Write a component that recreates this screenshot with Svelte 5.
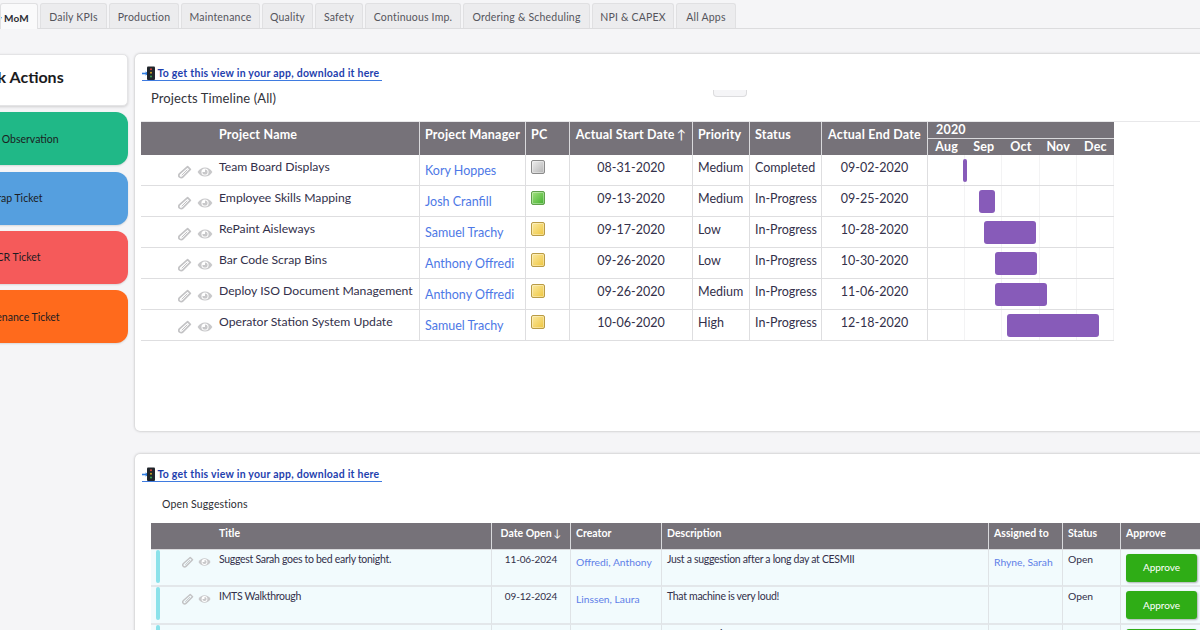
<script>
  const tabs = [
    { label: "Daily MoM", width: 38, active: true },
    { label: "Daily KPIs", width: 67 },
    { label: "Production", width: 70 },
    { label: "Maintenance", width: 79 },
    { label: "Quality", width: 51 },
    { label: "Safety", width: 48 },
    { label: "Continuous Imp.", width: 96 },
    { label: "Ordering & Scheduling", width: 127 },
    { label: "NPI & CAPEX", width: 82 },
    { label: "All Apps", width: 60 },
  ];

  const actions = [
    { label: "Safety Observation", color: "#20b887" },
    { label: "Scrap Ticket", color: "#559fdf" },
    { label: "NCR Ticket", color: "#f55a5a" },
    { label: "Maintenance Ticket", color: "#ff6a1c" },
  ];

  // bar offsets are measured from the left edge of the gantt column
  const projects = [
    { name: "Team Board Displays", pm: "Kory Hoppes", pc: "grey", start: "08-31-2020", priority: "Medium", status: "Completed", end: "09-02-2020", left: 35, width: 4 },
    { name: "Employee Skills Mapping", pm: "Josh Cranfill", pc: "green", start: "09-13-2020", priority: "Medium", status: "In-Progress", end: "09-25-2020", left: 51, width: 16 },
    { name: "RePaint Aisleways", pm: "Samuel Trachy", pc: "yellow", start: "09-17-2020", priority: "Low", status: "In-Progress", end: "10-28-2020", left: 56, width: 52 },
    { name: "Bar Code Scrap Bins", pm: "Anthony Offredi", pc: "yellow", start: "09-26-2020", priority: "Low", status: "In-Progress", end: "10-30-2020", left: 67, width: 42 },
    { name: "Deploy ISO Document Management", pm: "Anthony Offredi", pc: "yellow", start: "09-26-2020", priority: "Medium", status: "In-Progress", end: "11-06-2020", left: 67, width: 52 },
    { name: "Operator Station System Update", pm: "Samuel Trachy", pc: "yellow", start: "10-06-2020", priority: "High", status: "In-Progress", end: "12-18-2020", left: 79, width: 92 },
  ];

  const months = ["Aug", "Sep", "Oct", "Nov", "Dec"];

  const suggestions = [
    { title: "Suggest Sarah goes to bed early tonight.", date: "11-06-2024", creator: "Offredi, Anthony", description: "Just a suggestion after a long day at CESMII", assigned: "Rhyne, Sarah", status: "Open" },
    { title: "IMTS Walkthrough", date: "09-12-2024", creator: "Linssen, Laura", description: "That machine is very loud!", assigned: "", status: "Open" },
    { title: "Test MOM", date: "09-09-2024", creator: "Offredi, Anthony", description: "Test suggestion", assigned: "", status: "Open" },
  ];
</script>

{#snippet rowIcons()}
  <svg class="pencil" viewBox="0 0 14 14" width="14" height="14">
    <path d="M9.6 1.7l2.7 2.7-7.4 7.4c-.9.9-2.6 1-3.4.2s-.7-2.4.2-3.3z" fill="none" stroke="#c3c3c5" stroke-width="1.7" stroke-linejoin="round" />
    <path d="M3.7 10.3l5.6-5.6" stroke="#c3c3c5" stroke-width="1" />
  </svg>
  <svg class="eye" viewBox="0 0 16 12" width="16" height="12">
    <path d="M.6 6C2.4 2.9 5 1.4 8 1.4s5.6 1.5 7.4 4.6c-1.8 3.1-4.4 4.6-7.4 4.6S2.4 9.1.6 6z" fill="#c8c8ca" />
    <circle cx="8" cy="6" r="3.6" fill="#fff" />
    <path d="M8 3.4A2.6 2.6 0 1 1 5.4 6H8z" fill="#c8c8ca" />
  </svg>
{/snippet}

{#snippet downloadLink()}
  <a class="download" href="#top">
    <svg viewBox="0 0 13 14" width="13" height="14">
      <path d="M0 7.5h5" stroke="#2f7de1" stroke-width="1.6" />
      <path d="M3.6 5.3l2.6 2.2-2.6 2.2z" fill="#2f7de1" />
      <rect x="5" y="0.5" width="8" height="13.5" rx="1" fill="#20252b" />
      <circle cx="9" cy="3.2" r="1" fill="#d8453c" />
      <circle cx="9" cy="6.8" r="1" fill="#c9a227" />
      <circle cx="9" cy="10.4" r="1" fill="#3aa655" />
    </svg>
    To get this view in your app, download it here&nbsp;
  </a>
{/snippet}

<div class="page">
  <nav class="tabs">
    {#each tabs as tab}
      <div class="tab" class:active={tab.active} style="width: {tab.width}px">{tab.label}</div>
    {/each}
  </nav>

  <div class="content">
    <aside class="actions">
      <div class="actions-title">Quick Actions</div>
      {#each actions as action}
        <div class="action" style="background: {action.color}">{action.label}</div>
      {/each}
    </aside>

    <main class="cards">
      <section class="card timeline">
        {@render downloadLink()}
        <div class="sliver"></div>
        <h2 class="timeline-title">Projects Timeline (All)</h2>
        <div class="rule"></div>

        <div class="projects">
          <div class="phead name">Project Name</div>
          <div class="phead">Project Manager</div>
          <div class="phead">PC</div>
          <div class="phead center">Actual Start Date<span class="arrow">↑</span></div>
          <div class="phead">Priority</div>
          <div class="phead">Status</div>
          <div class="phead center">Actual End Date</div>
          <div class="phead gantt-head">
            <div class="year">2020</div>
            <div class="months">
              {#each months as month}
                <span>{month}</span>
              {/each}
            </div>
          </div>

          {#each projects as p}
            <div class="cell name-cell">
              <span class="icons">{@render rowIcons()}</span>
              <span>{p.name}</span>
            </div>
            <div class="cell"><span class="person">{p.pm}</span></div>
            <div class="cell"><span class="pc {p.pc}"></span></div>
            <div class="cell center">{p.start}</div>
            <div class="cell">{p.priority}</div>
            <div class="cell">{p.status}</div>
            <div class="cell center">{p.end}</div>
            <div class="cell gantt">
              {#each months as month}
                <i></i>
              {/each}
              <b style="left: {p.left}px; width: {p.width}px"></b>
            </div>
          {/each}
        </div>
      </section>

      <section class="card open">
        {@render downloadLink()}
        <h2 class="open-title">Open Suggestions</h2>

        <div class="suggestions">
          <div class="shead title-head">Title</div>
          <div class="shead center">Date Open<span class="arrow">↓</span></div>
          <div class="shead">Creator</div>
          <div class="shead">Description</div>
          <div class="shead">Assigned to</div>
          <div class="shead">Status</div>
          <div class="shead">Approve</div>

          {#each suggestions as s}
            <div class="scell title-cell">
              <span class="marker"></span>
              <span class="icons small">{@render rowIcons()}</span>
              <span>{s.title}</span>
            </div>
            <div class="scell center date">{s.date}</div>
            <div class="scell"><span class="person low">{s.creator}</span></div>
            <div class="scell">{s.description}</div>
            <div class="scell"><span class="person low">{s.assigned}</span></div>
            <div class="scell state">{s.status}</div>
            <div class="scell approve-cell"><div class="approve">Approve</div></div>
          {/each}
        </div>
      </section>
    </main>
  </div>
</div>

<style>
  :global(body) {
    margin: 0;
    overflow: hidden;
    background: #f5f5f7;
  }

  .page {
    width: 1200px;
    height: 630px;
    overflow: hidden;
    font-family: Lato, "Open Sans", sans-serif;
    color: #33304a;
  }

  .tabs {
    display: flex;
    gap: 2px;
    height: 29px;
    box-sizing: border-box;
    padding-top: 3px;
    border-bottom: 1px solid #dcdcde;
  }

  .tab {
    box-sizing: border-box;
    height: 25px;
    padding-top: 2px;
    display: flex;
    align-items: center;
    justify-content: center;
    flex-shrink: 0;
    border: 1px solid #e0e0e2;
    border-bottom: 0;
    border-radius: 3px 3px 0 0;
    background: #ececee;
    color: #55555c;
    font-size: 10.5px;
    letter-spacing: 0.2px;
    white-space: nowrap;
  }

  .tab.active {
    height: 26px;
    background: #fafafb;
    color: #2c2c33;
    font-weight: 700;
    font-size: 10px;
    direction: rtl;
    overflow: hidden;
    justify-content: flex-start;
    padding-right: 8px;
  }

  .content {
    display: flex;
    gap: 7px;
    padding-top: 25px;
    margin-left: -72px;
  }

  .actions {
    width: 200px;
    flex-shrink: 0;
    display: flex;
    flex-direction: column;
    gap: 6.3px;
  }

  .actions-title {
    box-sizing: border-box;
    height: 52px;
    padding: 0 0 8px 35px;
    display: flex;
    align-items: center;
    background: #fff;
    border: 1px solid #e4e4e6;
    border-radius: 5px;
    box-shadow: 0 1px 3px rgba(0, 0, 0, 0.16);
    color: #1a1a1d;
    font-size: 16px;
    font-weight: 700;
  }

  .action {
    box-sizing: border-box;
    height: 53px;
    padding: 0 27px 0 0;
    display: flex;
    align-items: center;
    justify-content: center;
    border-radius: 12px;
    color: #1c1c22;
    font-size: 10.5px;
    box-shadow: 0 1px 2px rgba(0, 0, 0, 0.12);
    white-space: nowrap;
  }

  .cards {
    display: flex;
    flex-direction: column;
    gap: 23px;
    width: 1137px;
    flex-shrink: 0;
  }

  .card {
    position: relative;
    box-sizing: border-box;
    background: #fff;
    border-radius: 5px;
    box-shadow: 0 0 3px rgba(0, 0, 0, 0.28);
    padding: 11px 0 0 7px;
  }

  .timeline {
    height: 377px;
  }

  .open {
    height: 300px;
    padding-top: 12px;
  }

  .download {
    display: flex;
    align-items: flex-end;
    width: fit-content;
    height: 15px;
    color: #1f3fae;
    font-size: 10.5px;
    font-weight: 700;
    letter-spacing: 0.25px;
    line-height: 13px;
    text-decoration: none;
    border-bottom: 1px solid #3f7be0;
    white-space: pre;
  }

  .sliver {
    position: absolute;
    left: 578px;
    top: 36px;
    width: 32px;
    height: 6px;
    border: 1px solid #dcdcde;
    border-top: 0;
    border-radius: 0 0 4px 4px;
    background: #f5f5f7;
  }

  .timeline-title {
    margin: 10px 0 16px 9px;
    height: 14px;
    color: #33333a;
    font-size: 13px;
    font-weight: 400;
    line-height: 14px;
    letter-spacing: 0.1px;
  }

  .rule {
    height: 1px;
    margin-left: -1px;
    background: #e8e8ea;
  }

  .projects {
    display: grid;
    grid-template-columns: 279px 106px 44px 123px 57px 72px 106px 186px;
    grid-template-rows: 33px repeat(6, 31px);
    width: 973px;
    margin-left: -1px;
  }

  .phead {
    box-sizing: border-box;
    padding: 5px 0 0 5px;
    background: #767279;
    border-right: 1px solid #d9d9dc;
    color: #fff;
    font-size: 12.5px;
    font-weight: 700;
    letter-spacing: 0.2px;
    white-space: nowrap;
  }

  .phead.name {
    padding-left: 78px;
  }

  .phead.center {
    padding-left: 0;
    text-align: center;
  }

  .phead.gantt-head {
    padding: 0;
    border-right: 0;
  }

  .arrow {
    font-weight: 400;
    margin-left: 2px;
  }

  .year {
    height: 16px;
    padding-left: 8px;
    line-height: 15px;
    border-bottom: 1px solid #d9d9dc;
  }

  .months {
    display: grid;
    grid-template-columns: repeat(5, 1fr);
    line-height: 15px;
    text-align: center;
  }

  .cell {
    box-sizing: border-box;
    padding: 5px 0 0 5px;
    border-right: 1px solid #dedee0;
    border-bottom: 1px solid #dedee0;
    font-size: 12.5px;
    line-height: 16px;
    white-space: nowrap;
  }

  .cell.center {
    padding-left: 0;
    text-align: center;
  }

  .name-cell {
    display: flex;
    padding: 4px 0 0;
    font-size: 12.2px;
  }

  .icons {
    box-sizing: border-box;
    display: flex;
    align-items: center;
    justify-content: flex-end;
    gap: 5px;
    width: 78px;
    height: 16px;
    flex-shrink: 0;
    padding: 9px 6px 0 0;
  }

  .icons.small {
    width: 68px;
    gap: 4px;
    padding: 2px 8px 0 0;
  }

  .icons.small .pencil {
    width: 12px;
    height: 12px;
  }

  .icons.small .eye {
    width: 13px;
    height: 10px;
  }

  .person {
    display: block;
    padding-top: 3px;
    color: #4d78e6;
  }

  .person.low {
    padding-top: 3px;
    color: #5f7fe8;
    font-size: 10.3px;
    letter-spacing: 0;
  }

  .pc {
    display: block;
    box-sizing: border-box;
    width: 14px;
    height: 14px;
    border-radius: 2px;
    border: 1px solid #8a8a8a;
    box-shadow: inset 0 0 0 1px rgba(255, 255, 255, 0.35);
  }

  .pc.grey {
    background: linear-gradient(135deg, #eeeeee, #b4b4b4);
  }

  .pc.green {
    background: linear-gradient(135deg, #a2e27e, #43b02f);
    border-color: #5fa04a;
  }

  .pc.yellow {
    background: linear-gradient(135deg, #fbe9a0, #eec53f);
    border-color: #b99b45;
  }

  .gantt {
    position: relative;
    display: grid;
    grid-template-columns: repeat(5, 1fr);
    padding: 0;
    border-right: 0;
  }

  .gantt i {
    border-right: 1px solid #f3f3f4;
  }

  .gantt b {
    position: absolute;
    top: 4px;
    height: 23px;
    border-radius: 3px;
    background: #875bb9;
  }

  .open-title {
    margin: 16px 0 13px 20px;
    height: 12px;
    color: #2d2d33;
    font-size: 10.5px;
    font-weight: 400;
    line-height: 12px;
    letter-spacing: 0.15px;
  }

  .suggestions {
    display: grid;
    grid-template-columns: 341px 79px 91px 327px 74px 58px 80px;
    grid-template-rows: 26.5px repeat(3, 37.5px);
    margin-left: 9px;
    width: 1050px;
  }

  .shead {
    box-sizing: border-box;
    padding: 4px 0 0 5px;
    background: #767279;
    border-right: 1px solid #d9d9dc;
    border-bottom: 1px solid #d9d9dc;
    color: #fff;
    font-size: 10.5px;
    font-weight: 700;
    white-space: nowrap;
  }

  .shead.title-head {
    padding-left: 68px;
  }

  .shead.center {
    padding-left: 0;
    text-align: center;
  }

  .scell {
    box-sizing: border-box;
    padding: 3px 0 0 5px;
    background: #f2fbfd;
    border-right: 1px solid #dfe3e6;
    border-bottom: 2px solid #e3e7ea;
    font-size: 10.5px;
    letter-spacing: -0.3px;
    line-height: 13px;
    white-space: nowrap;
  }

  .scell.center {
    padding-left: 0;
    text-align: center;
  }

  .scell.date {
    font-size: 10px;
    letter-spacing: -0.15px;
  }

  .scell.state {
    font-size: 10.3px;
    letter-spacing: 0;
  }

  .title-cell {
    position: relative;
    display: flex;
    padding-left: 0;
  }

  .marker {
    position: absolute;
    left: 5px;
    top: 0;
    width: 4px;
    height: 33px;
    border-radius: 2px;
    background: #8be2ea;
  }

  .approve-cell {
    padding: 4px 0 0 5px;
    border-right: 0;
    letter-spacing: 0;
  }

  .approve {
    width: 71px;
    height: 28px;
    display: flex;
    align-items: center;
    justify-content: center;
    border-radius: 3px;
    background: #2fad16;
    box-shadow: 1px 1px 2px rgba(0, 0, 0, 0.3);
    color: #fff;
    font-size: 10px;
  }
</style>
